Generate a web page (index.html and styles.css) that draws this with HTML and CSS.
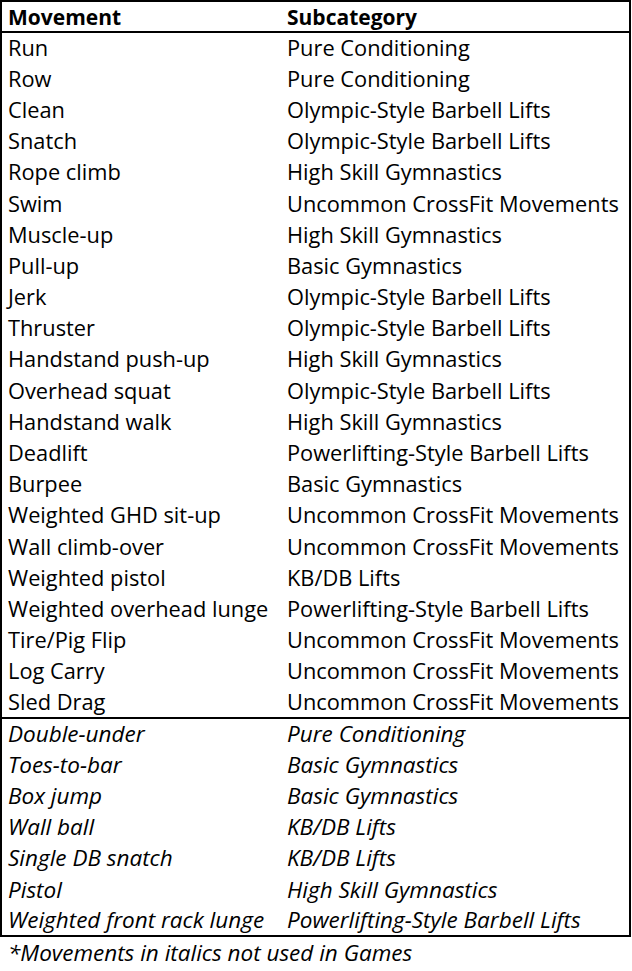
FILE: index.html
```html
<!DOCTYPE html>
<html>
<head>
<meta charset="utf-8">
<link rel="stylesheet" href="styles.css">
</head>
<body>
<table class="moves">
  <colgroup><col class="c1"><col class="c2"></colgroup>
  <thead>
    <tr><th>Movement</th><th>Subcategory</th></tr>
  </thead>
  <tbody class="games">
    <tr><td>Run</td><td>Pure Conditioning</td></tr>
    <tr><td>Row</td><td>Pure Conditioning</td></tr>
    <tr><td>Clean</td><td>Olympic-Style Barbell Lifts</td></tr>
    <tr><td>Snatch</td><td>Olympic-Style Barbell Lifts</td></tr>
    <tr><td>Rope climb</td><td>High Skill Gymnastics</td></tr>
    <tr><td>Swim</td><td>Uncommon CrossFit Movements</td></tr>
    <tr><td>Muscle-up</td><td>High Skill Gymnastics</td></tr>
    <tr><td>Pull-up</td><td>Basic Gymnastics</td></tr>
    <tr><td>Jerk</td><td>Olympic-Style Barbell Lifts</td></tr>
    <tr><td>Thruster</td><td>Olympic-Style Barbell Lifts</td></tr>
    <tr><td>Handstand push-up</td><td>High Skill Gymnastics</td></tr>
    <tr><td>Overhead squat</td><td>Olympic-Style Barbell Lifts</td></tr>
    <tr><td>Handstand walk</td><td>High Skill Gymnastics</td></tr>
    <tr><td>Deadlift</td><td>Powerlifting-Style Barbell Lifts</td></tr>
    <tr><td>Burpee</td><td>Basic Gymnastics</td></tr>
    <tr><td>Weighted GHD sit-up</td><td>Uncommon CrossFit Movements</td></tr>
    <tr><td>Wall climb-over</td><td>Uncommon CrossFit Movements</td></tr>
    <tr><td>Weighted pistol</td><td>KB/DB Lifts</td></tr>
    <tr><td>Weighted overhead lunge</td><td>Powerlifting-Style Barbell Lifts</td></tr>
    <tr><td>Tire/Pig Flip</td><td>Uncommon CrossFit Movements</td></tr>
    <tr><td>Log Carry</td><td>Uncommon CrossFit Movements</td></tr>
    <tr><td>Sled Drag</td><td>Uncommon CrossFit Movements</td></tr>
  </tbody>
  <tbody class="other">
    <tr><td>Double-under</td><td>Pure Conditioning</td></tr>
    <tr><td>Toes-to-bar</td><td>Basic Gymnastics</td></tr>
    <tr><td>Box jump</td><td>Basic Gymnastics</td></tr>
    <tr><td>Wall ball</td><td>KB/DB Lifts</td></tr>
    <tr><td>Single DB snatch</td><td>KB/DB Lifts</td></tr>
    <tr><td>Pistol</td><td>High Skill Gymnastics</td></tr>
    <tr><td>Weighted front rack lunge</td><td>Powerlifting-Style Barbell Lifts</td></tr>
  </tbody>
</table>
<p class="note">*Movements in italics not used in Games</p>
</body>
</html>
```

FILE: styles.css
```css
html, body {
  margin: 0;
  padding: 0;
  background: #ffffff;
}
body {
  font-family: "Open Sans", "Lato", sans-serif;
  font-size: 21.8px;
  color: #000000;
  width: 632px;
}
.moves {
  width: 631px;
  border-collapse: collapse;
  table-layout: fixed;
  border: 2px solid #000;
}
.c1 { width: 280px; }
.moves th,
.moves td {
  height: 31.2px;
  padding: 0 0 0 6px;
  text-align: left;
  vertical-align: middle;
  white-space: nowrap;
  line-height: 26px;
  box-sizing: border-box;
}
.moves th {
  font-weight: bold;
  font-size: 21px;
  height: 31px;
  border-bottom: 2px solid #000;
}
.other {
  font-style: italic;
  font-size: 22.5px;
  border-top: 2px solid #000;
}
.note {
  margin: 0;
  padding: 3px 0 0 8px;
  font-style: italic;
  font-size: 22.5px;
  line-height: 26px;
}
```
